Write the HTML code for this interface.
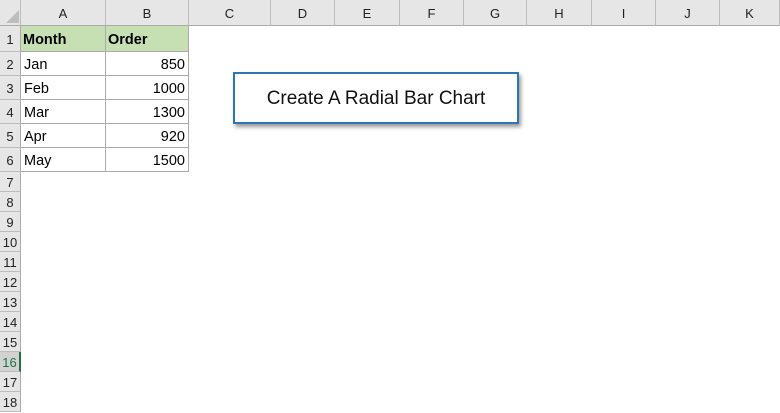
<!DOCTYPE html>
<html><head><style>
body{margin:0;width:780px;height:401px;overflow:hidden;background:#fff;font-family:"Liberation Sans",Arial,sans-serif;position:relative}
.abs{position:absolute;box-sizing:border-box}
.ch{background:#e6e6e6;border-right:1px solid #bcbcbc;border-bottom:1px solid #ababab;top:0;height:26px;font-size:13px;color:#222;text-align:center;line-height:27px}
.rh{background:#e6e6e6;border-bottom:1px solid #bcbcbc;border-right:1px solid #ababab;left:0;width:21px;font-size:13px;color:#222;text-align:center}
.c{border-right:1px solid #ababab;border-bottom:1px solid #ababab;font-size:14.5px;color:#000;padding:0 3px}
</style></head><body>
<div class="abs ch" style="left:0;width:21px"></div>
<svg class="abs" style="left:6px;top:10px" width="13" height="13"><polygon points="13,0 13,13 0,13" fill="#bdbdbd"/></svg>
<div class="abs ch" style="left:21px;width:85px">A</div>
<div class="abs ch" style="left:106px;width:83px">B</div>
<div class="abs ch" style="left:189px;width:82px">C</div>
<div class="abs ch" style="left:271px;width:64px">D</div>
<div class="abs ch" style="left:335px;width:65px">E</div>
<div class="abs ch" style="left:400px;width:64px">F</div>
<div class="abs ch" style="left:464px;width:63px">G</div>
<div class="abs ch" style="left:527px;width:65px">H</div>
<div class="abs ch" style="left:592px;width:64px">I</div>
<div class="abs ch" style="left:656px;width:64px">J</div>
<div class="abs ch" style="left:720px;width:60px">K</div>

<div class="abs rh" style="top:26px;height:26px;line-height:28px">1</div>
<div class="abs rh" style="top:52px;height:24px;line-height:26px">2</div>
<div class="abs rh" style="top:76px;height:24px;line-height:26px">3</div>
<div class="abs rh" style="top:100px;height:24px;line-height:26px">4</div>
<div class="abs rh" style="top:124px;height:24px;line-height:26px">5</div>
<div class="abs rh" style="top:148px;height:24px;line-height:26px">6</div>
<div class="abs rh" style="top:172px;height:20px;line-height:21px">7</div>
<div class="abs rh" style="top:192px;height:20px;line-height:21px">8</div>
<div class="abs rh" style="top:212px;height:20px;line-height:21px">9</div>
<div class="abs rh" style="top:232px;height:20px;line-height:21px">10</div>
<div class="abs rh" style="top:252px;height:20px;line-height:21px">11</div>
<div class="abs rh" style="top:272px;height:20px;line-height:21px">12</div>
<div class="abs rh" style="top:292px;height:20px;line-height:21px">13</div>
<div class="abs rh" style="top:312px;height:20px;line-height:21px">14</div>
<div class="abs rh" style="top:332px;height:20px;line-height:21px">15</div>
<div class="abs rh" style="top:352px;height:20px;line-height:21px;background:#d2d2d2;color:#217346;border-right:2px solid #217346">16</div>
<div class="abs rh" style="top:372px;height:20px;line-height:21px">17</div>
<div class="abs rh" style="top:392px;height:20px;line-height:21px">18</div>

<div class="abs c" style="left:21px;top:26px;width:85px;height:26px;background:#c6e0b4;font-weight:bold;line-height:29px;padding-left:2px">Month</div>
<div class="abs c" style="left:106px;top:26px;width:83px;height:26px;background:#c6e0b4;font-weight:bold;line-height:29px;padding-left:2px">Order</div>
<div class="abs c" style="left:21px;top:52px;width:85px;height:24px;line-height:27px">Jan</div>
<div class="abs c" style="left:106px;top:52px;width:83px;height:24px;line-height:27px;text-align:right">850</div>
<div class="abs c" style="left:21px;top:76px;width:85px;height:24px;line-height:27px">Feb</div>
<div class="abs c" style="left:106px;top:76px;width:83px;height:24px;line-height:27px;text-align:right">1000</div>
<div class="abs c" style="left:21px;top:100px;width:85px;height:24px;line-height:27px">Mar</div>
<div class="abs c" style="left:106px;top:100px;width:83px;height:24px;line-height:27px;text-align:right">1300</div>
<div class="abs c" style="left:21px;top:124px;width:85px;height:24px;line-height:27px">Apr</div>
<div class="abs c" style="left:106px;top:124px;width:83px;height:24px;line-height:27px;text-align:right">920</div>
<div class="abs c" style="left:21px;top:148px;width:85px;height:24px;line-height:27px">May</div>
<div class="abs c" style="left:106px;top:148px;width:83px;height:24px;line-height:27px;text-align:right">1500</div>

<div class="abs" style="left:233px;top:72px;width:286px;height:52px;border:2px solid #2e75b6;background:#fff;box-shadow:2px 3px 4px rgba(0,0,0,0.4);text-align:center;line-height:49px;font-size:19px;color:#111">Create A Radial Bar Chart</div>
</body></html>
